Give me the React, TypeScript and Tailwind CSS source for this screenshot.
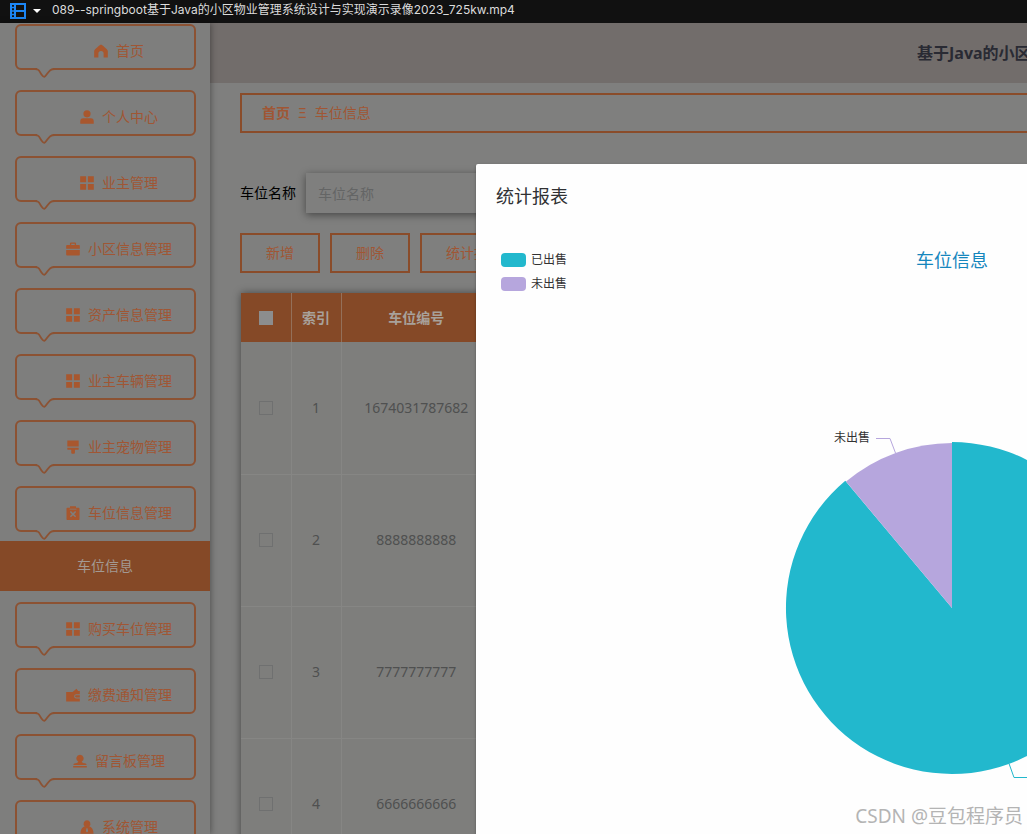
import type { ReactNode } from 'react';

const icons: Record<string, ReactNode> = {
  home: <path d="M8 0.5C7.500 0.500 0.200 6 0.200 8V15.500h4.800v-4.500a3 3 0 0 1 6 0v4.500h4.800V8C15.800 6 8.500 0.500 8 0.500z" />,
  user: (
    <>
      <circle cx="8" cy="4.4" r="4.1" />
      <path d="M0.300 15.700v-2.600A3.600 3.600 0 0 1 4 9.400h8a3.600 3.600 0 0 1 3.700 3.700v2.600z" />
    </>
  ),
  menu: <path d="M0.200 0.200H7V7H0.200zM9 0.200h6.800V7H9zM0.200 9H7v6.800H0.200zM9 9h6.800v6.800H9z" />,
  suitcase: (
    <path
      fillRule="evenodd"
      d="M4.5 3.4V1.8A1.3 1.3 0 0 1 5.8.5h4.4a1.3 1.3 0 0 1 1.3 1.3v1.6h3.3a1 1 0 0 1 1 1v3.4H.2V4.4a1 1 0 0 1 1-1zM6 3.4h4V2H6zM.2 9.2h15.6v5.2a1 1 0 0 1-1 1H1.2a1 1 0 0 1-1-1z"
    />
  ),
  brush: <path d="M1.500 0.500h13v7h-13zM1.500 8.800h13v1.400a1 1 0 0 1-1 1H10.200v3.300a1.200 1.200 0 0 1-1.200 1.200H7.200a1.200 1.200 0 0 1-1.200-1.200v-3.300H2.500a1 1 0 0 1-1-1z" />,
  release: (
    <path
      fillRule="evenodd"
      d="M4.6 2V0.4h6.8V2h3.2a.8.8 0 0 1 .8.8v12.4a.8.8 0 0 1-.8.8H1.4a.8.8 0 0 1-.8-.8V2.8a.8.8 0 0 1 .8-.8zM8 8.1 5.6 5.7 4.4 6.9l2.4 2.4-2.4 2.4 1.2 1.2L8 10.5l2.4 2.4 1.2-1.2-2.4-2.4 2.4-2.4-1.2-1.2zM4 3.2v.9h8v-.9z"
    />
  ),
  wallet: (
    <path
      fillRule="evenodd"
      d="M0.2 4.500H7.500L12 0.800l1.800 2.700H15.800v3.500h-4a2.3 2.3 0 0 0 0 5h4v3.500H0.2zM11.600 8.200h4.200v2.600h-4.200a1.300 1.300 0 0 1 0-2.600z"
    />
  ),
  custom: <path d="M8 .8a4.1 4.1 0 0 1 2 7.7c.2 1.3 1.6 1.8 3.4 2.2 1.2.3 2.1.9 2.1 2H.5c0-1.1.9-1.7 2.1-2 1.8-.4 3.200-.9 3.400-2.200A4.100 4.100 0 0 1 8 .8zM.2 13.800h15.600v1.700H.2z" />,
  admin: (
    <path
      fillRule="evenodd"
      d="M8 .3a3.900 3.900 0 0 1 2.600 6.800c2.900 1 4.900 3.900 4.900 8.600H.5c0-4.700 2-7.600 4.900-8.600A3.900 3.900 0 0 1 8 .3zM7.400 9.500l-.7 3.300L8 14.200l1.300-1.400L8.600 9.500z"
    />
  ),
};

const menuItems = [
  { icon: 'home', label: '首页' },
  { icon: 'user', label: '个人中心' },
  { icon: 'menu', label: '业主管理' },
  { icon: 'suitcase', label: '小区信息管理' },
  { icon: 'menu', label: '资产信息管理' },
  { icon: 'menu', label: '业主车辆管理' },
  { icon: 'brush', label: '业主宠物管理' },
  { icon: 'release', label: '车位信息管理', child: '车位信息' },
  { icon: 'menu', label: '购买车位管理' },
  { icon: 'wallet', label: '缴费通知管理' },
  { icon: 'custom', label: '留言板管理' },
  { icon: 'admin', label: '系统管理' },
];

const rows = [
  { id: 1, code: '1674031787682' },
  { id: 2, code: '8888888888' },
  { id: 3, code: '7777777777' },
  { id: 4, code: '6666666666' },
];

const legend = [
  { name: '已出售', swatch: 'bg-[#22b8cd]' },
  { name: '未出售', swatch: 'bg-[#b6a6dd]' },
];

function TitleBar() {
  return (
    <div className="flex h-[23px] shrink-0 items-center bg-[#111111] pl-[10px] pb-1 font-['Inter','Noto_Sans_CJK_SC',sans-serif] text-xs text-[#dcdcdc]">
      <svg className="mt-[2px] size-4" viewBox="0 0 16 16" fill="none" stroke="#1c86f5" strokeWidth="2">
        <path d="M1 1h14v14H1zM5 1v14M5 8h10" />
        <path d="M0 4.500h4M0 8h4M0 11.500h4" strokeWidth="1.300" />
      </svg>
      <svg className="ml-[7px] mt-[2px] h-1 w-2" viewBox="0 0 8 4" fill="#ffffff">
        <path d="M0 0h8L4 4z" />
      </svg>
      <span className="ml-[11px] whitespace-nowrap">
        089--springboot基于Java的小区物业管理系统设计与实现演示录像2023_725kw.mp4
      </span>
    </div>
  );
}

function Sidebar() {
  return (
    <aside className="relative z-10 w-[210px] shrink-0 overflow-hidden bg-[#7e7e7d] shadow-[1px_0_6px_rgba(0,0,0,0.35)]">
      <ul className="-mt-[10px]">
        {menuItems.map((item) => (
          <li key={item.label}>
            <div className="pt-[11px] pr-[14px] pb-[9px] pl-[15px]">
              <a
                href="#"
                className="relative flex h-[46px] items-center justify-center gap-2 rounded-md border-2 border-[#8c5233] pt-2 pl-[27px] text-sm text-[#a05634]"
              >
                <svg className="size-[14px]" viewBox="0 0 16 16" fill="#a8572e">
                  {icons[item.icon]}
                </svg>
                {item.label}
                <svg className="absolute top-full left-[18px] h-[11px] w-5" viewBox="0 0 20 11" fill="none">
                  <path d="M2 0h16v3H2z" fill="#7e7e7d" />
                  <path d="M0 1C4.500 1 4 3 6.500 6.500S9.500 9.500 12 6 15.500 1 20 1" stroke="#8c5233" strokeWidth="1.800" fill="#7e7e7d" />
                </svg>
              </a>
            </div>
            {item.child && (
              <a href="#" className="flex h-[50px] items-center justify-center bg-[#854927] text-sm text-[#a39a93]">
                {item.child}
              </a>
            )}
          </li>
        ))}
      </ul>
    </aside>
  );
}

function ParkingTable() {
  return (
    <table className="mt-5 ml-px w-[250px] table-fixed border-collapse text-center text-sm text-[#4f5050] shadow-[0_0_8px_rgba(0,0,0,0.45)]">
      <thead>
        <tr className="h-[49px] bg-[#854927] text-[#a8a19b]">
          <th className="w-[50px] border-r border-[#94705a]">
            <input type="checkbox" aria-label="全选" className="mx-auto block size-[14px] appearance-none bg-[#8c8d8e]" />
          </th>
          <th className="w-[50px] border-r border-[#94705a]">索引</th>
          <th>车位编号</th>
        </tr>
      </thead>
      <tbody>
        {rows.map((row) => (
          <tr key={row.id} className="h-[132px] border-b border-[#868684] bg-[#7e7e7c]">
            <td className="border-r border-[#868684]">
              <input
                type="checkbox"
                aria-label={`选择 ${row.code}`}
                className="mx-auto block size-[14px] appearance-none border border-[#6f7070]"
              />
            </td>
            <td className="border-r border-[#868684]">{row.id}</td>
            <td>{row.code}</td>
          </tr>
        ))}
      </tbody>
    </table>
  );
}

function PieChart() {
  return (
    <svg className="block h-[560px] w-full" viewBox="0 0 912 560" fontSize="12">
      <path d="M456 312V146A166 166 0 1 1 349.300 184.800z" fill="#22b8cd" />
      <path d="M456 312V147A165 165 0 0 0 350 185.600z" fill="#b6a6dd" />
      <path d="M399.500 157 394 142.500H380" fill="none" stroke="#b6a6dd" />
      <path d="M513 467.500 518 481.500H532" fill="none" stroke="#22b8cd" />
      <text x="338" y="146" fill="#333333">
        未出售
      </text>
    </svg>
  );
}

function ReportDialog() {
  return (
    <div
      role="dialog"
      aria-labelledby="report-title"
      className="absolute top-[164px] bottom-0 left-[476px] z-20 w-[952px] overflow-hidden rounded-t-xs bg-[#fefefe] shadow-[0_1px_3px_rgba(0,0,0,0.3)]"
    >
      <h2 id="report-title" className="px-5 pt-5 pb-[10px] text-lg leading-6 text-[#303133]">
        统计报表
      </h2>
      <div className="px-5 pt-[30px]">
        <div className="grid grid-cols-3">
          <ul className="pl-[5px] text-xs text-[#333333]">
            {legend.map((item) => (
              <li key={item.name} className="flex h-6 items-center gap-[5px]">
                <span className={`h-[14px] w-[25px] rounded ${item.swatch}`} />
                {item.name}
              </li>
            ))}
          </ul>
          <h3 className="text-center text-lg leading-6 text-[#1586bd]">车位信息</h3>
        </div>
        <PieChart />
      </div>
    </div>
  );
}

export default function App() {
  const buttonClass = 'h-10 shrink-0 border-2 border-[#8a4c2a] px-6 text-sm text-[#a05634]';

  return (
    <div className="relative flex h-screen flex-col overflow-hidden bg-[#7f7f7e] font-['Noto_Sans','Noto_Sans_CJK_SC',sans-serif]">
      <TitleBar />
      <div className="flex min-h-0 flex-1">
        <Sidebar />
        <main className="min-w-0 flex-1 overflow-hidden">
          <header className="flex h-[60px] items-center overflow-hidden bg-[#726d6b] pl-[707px]">
            <h1 className="whitespace-nowrap text-base font-bold text-[#292a33]">基于Java的小区物业管理系统</h1>
          </header>
          <div className="pt-[10px] pl-[30px]">
            <nav className="flex h-10 items-center border-2 border-r-0 border-[#8a4c2a] pl-5 text-sm text-[#a05634]">
              <a href="#" className="font-bold">
                首页
              </a>
              <span className="mx-2">Ξ</span>
              <span>车位信息</span>
            </nav>
            <form className="mt-10 flex items-center gap-[10px] text-sm">
              <label htmlFor="spot-name" className="text-black">
                车位名称
              </label>
              <input
                id="spot-name"
                placeholder="车位名称"
                className="h-10 w-[200px] bg-[#7f7f7e] px-3 shadow-[0_2px_8px_rgba(0,0,0,0.45)] placeholder:text-[#646565]"
              />
            </form>
            <div className="mt-5 flex gap-[10px]">
              <button className={buttonClass}>新增</button>
              <button className={buttonClass}>删除</button>
              <button className={buttonClass}>统计报表</button>
            </div>
            <ParkingTable />
          </div>
        </main>
      </div>
      <ReportDialog />
      <p className="absolute right-1 bottom-1 z-30 text-[19px] text-[#b4b4b4]">CSDN @豆包程序员</p>
    </div>
  );
}
